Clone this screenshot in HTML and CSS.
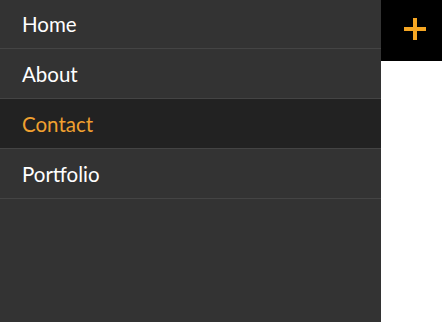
FILE: index.html
```html
<!DOCTYPE html>
<html>
<head>
<meta charset="utf-8">
<link rel="stylesheet" href="styles.css">
</head>
<body>
<div class="page">
  <nav class="sidebar">
    <ul class="menu">
      <li class="item"><a href="#">Home</a></li>
      <li class="item"><a href="#">About</a></li>
      <li class="item active"><a href="#">Contact</a></li>
      <li class="item"><a href="#">Portfolio</a></li>
    </ul>
  </nav>
  <div class="main">
    <button class="toggle" aria-label="Open menu">
      <svg width="24" height="24" viewBox="0 0 24 24"><rect x="10" y="1" width="4" height="22" fill="#f5a623"/><rect x="1" y="10" width="22" height="4" fill="#f5a623"/></svg>
    </button>
  </div>
</div>
</body>
</html>
```
FILE: styles.css
```css
html, body { margin: 0; padding: 0; }
body { font-family: Lato, "Noto Sans", sans-serif; background: #fff; }
.page { display: flex; height: 322px; }
.sidebar { width: 381px; background: #333333; flex: none; overflow: hidden; }
.menu { list-style: none; margin: -1px 0 0; padding: 0; }
.item { border-bottom: 1px solid #444444; }
.item a { display: block; height: 48px; line-height: 48px; padding: 1px 0 0 22px; color: #ffffff; text-decoration: none; font-size: 20.5px; }
.item.active { background: #222222; }
.item.active a { color: #f0a030; }
.main { flex: 1; }
.toggle { width: 61px; height: 61px; background: #000; border: 0; padding: 0 0 3px 6px; display: flex; align-items: center; justify-content: center; }
.toggle svg { display: block; }
```
